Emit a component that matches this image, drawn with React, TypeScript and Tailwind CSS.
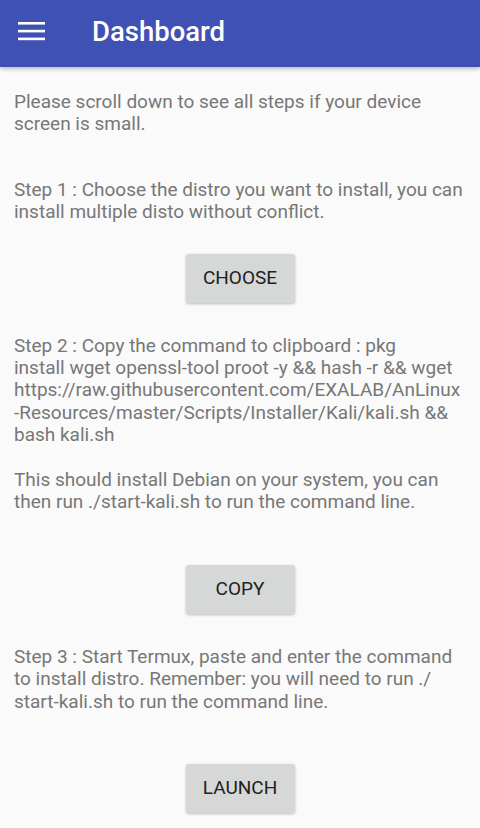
function MenuIcon() {
  return (
    <svg width="27" height="19" viewBox="0 0 27 19" className="block">
      <rect x="0" y="0" width="27" height="2.6" fill="#ffffff" />
      <rect x="0" y="7.8" width="27" height="2.6" fill="#ffffff" />
      <rect x="0" y="15.6" width="27" height="2.6" fill="#ffffff" />
    </svg>
  )
}

function GrayButton({ label }: { label: string }) {
  return (
    <div className="flex justify-center">
      <button className="h-[49px] w-[109px] rounded-[3px] bg-[#d6d7d7] text-[19px] font-normal uppercase text-[#212121] shadow-[0_1px_3px_rgba(0,0,0,0.25)]">
        {label}
      </button>
    </div>
  )
}

export default function App() {
  return (
    <div
      className="min-h-[828px] w-[480px] overflow-hidden bg-[#fafafa]"
      style={{ fontFamily: 'Roboto, "Noto Sans", sans-serif' }}
    >
      <header className="relative z-10 flex h-[67px] items-center bg-[#3f51b5] pb-[6px] shadow-[0_2px_4px_rgba(0,0,0,0.25)]">
        <div className="pl-[18px] pt-[1px]">
          <MenuIcon />
        </div>
        <h1 className="ml-[47px] pt-[2px] text-[27.5px] font-medium text-white">Dashboard</h1>
      </header>

      <main className="px-[14px] text-[19px] leading-[22.4px] text-[#777777]">
        <p className="pt-[24px]">
          Please scroll down to see all steps if your device screen is small.
        </p>
        <p className="mt-[43px]">
          Step 1 : Choose the distro you want to install, you can install multiple disto without conflict.
        </p>
        <div className="mt-[30px]">
          <GrayButton label="Choose" />
        </div>
        <p className="mt-[32px]">
          Step 2 : Copy the command to clipboard : pkg
          <br />
          install wget openssl-tool proot -y &amp;&amp; hash -r &amp;&amp; wget https://raw.githubusercontent.com/EXALAB/AnLinux
          <br />
          -Resources/master/Scripts/Installer/Kali/kali.sh &amp;&amp; bash kali.sh
          <br />
          <br />
          This should install Debian on your system, you can then run ./start-kali.sh to run the command line.
        </p>
        <div className="mt-[51px]">
          <GrayButton label="Copy" />
        </div>
        <p className="mt-[32px]">
          Step 3 : Start Termux, paste and enter the command to install distro. Remember: you will need to run ./
          <br />
          start-kali.sh to run the command line.
        </p>
        <div className="mt-[51px]">
          <GrayButton label="Launch" />
        </div>
      </main>
    </div>
  )
}
